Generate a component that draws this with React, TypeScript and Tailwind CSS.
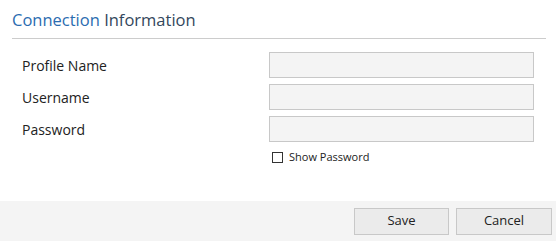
import React from "react";

const font = { fontFamily: '"Open Sans", "Noto Sans", sans-serif' };

function Row({ label, type = "text" }: { label: string; type?: string }) {
  return (
    <div className="flex items-center h-[26px]">
      <label className="w-[247px] text-[14px] text-[#222]">{label}</label>
      <input
        type={type}
        className="w-[265px] h-[26px] bg-[#f4f4f4] border border-[#c8c8c8] outline-none"
      />
    </div>
  );
}

export default function App() {
  return (
    <div className="w-[556px] h-[241px] bg-white flex flex-col" style={font}>
      <div className="mx-[12px] mr-[10px] pt-[9px] h-[39px] border-b border-[#cccccc]">
        <h2 className="text-[16.5px] leading-[22px] font-normal">
          <span className="text-[#2b6cb0]">Connection</span>{" "}
          <span className="text-[#33475c]">Information</span>
        </h2>
      </div>
      <div className="pl-[22px] pt-[13px] flex flex-col gap-[6px]">
        <Row label="Profile Name" />
        <Row label="Username" />
        <Row label="Password" type="password" />
        <div className="flex items-center pl-[250px] pt-[1px]">
          <span className="w-[11px] h-[11px] border border-[#333] bg-white" />
          <span className="ml-[6px] text-[11px] text-[#222]">Show Password</span>
        </div>
      </div>
      <div className="mt-auto h-[40px] bg-[#f4f4f4] flex items-center justify-end gap-[7px] pr-[4px]">
        <button className="w-[95px] h-[27px] bg-[#ebebeb] border border-[#c8c8c8] text-[13px] text-[#222]">
          Save
        </button>
        <button className="w-[96px] h-[27px] bg-[#ebebeb] border border-[#c8c8c8] text-[13px] text-[#222]">
          Cancel
        </button>
      </div>
    </div>
  );
}
